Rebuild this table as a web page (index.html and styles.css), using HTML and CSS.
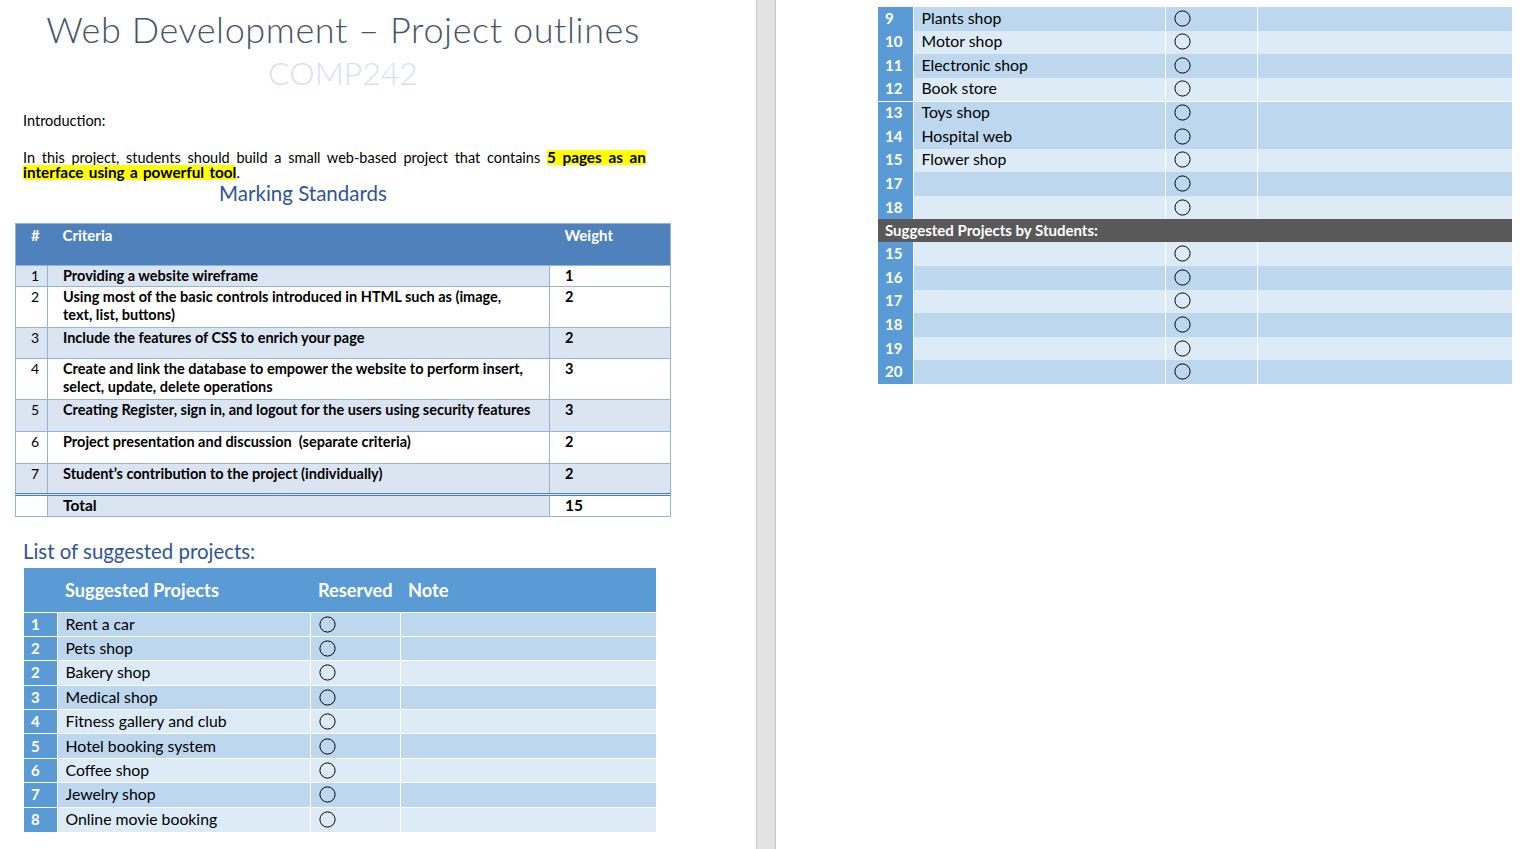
FILE: index.html
```html
<!DOCTYPE html>
<html lang="en">
<head>
<meta charset="utf-8">
<title>Web Development – Project outlines</title>
<link rel="stylesheet" href="styles.css">
</head>
<body>
<div class="doc">
  <section class="page page-left">
    <header class="titles">
      <h1 class="title">Web Development – Project outlines</h1>
      <div class="subtitle">COMP242</div>
    </header>
    <p class="intro">Introduction:</p>
    <p class="para">In this project, students should build a small web-based project that contains <mark>5 pages as an interface using a powerful tool</mark>.</p>
    <h2 class="marking">Marking Standards</h2>

    <table class="criteria">
      <colgroup><col class="c-num"><col class="c-crit"><col class="c-weight"></colgroup>
      <thead>
        <tr class="h42"><th class="num">#</th><th>Criteria</th><th>Weight</th></tr>
      </thead>
      <tbody>
        <tr class="band h21"><td class="num">1</td><td>Providing a website wireframe</td><td class="w white">1</td></tr>
        <tr class="h41"><td class="num">2</td><td>Using most of the basic controls introduced in HTML such as (image,<br>text, list, buttons)</td><td class="w">2</td></tr>
        <tr class="band h31"><td class="num">3</td><td>Include the features of CSS to enrich your page</td><td class="w">2</td></tr>
        <tr class="h41"><td class="num">4</td><td>Create and link the database to empower the website to perform insert,<br>select, update, delete operations</td><td class="w">3</td></tr>
        <tr class="band h32"><td class="num">5</td><td>Creating Register, sign in, and logout for the users using security features</td><td class="w">3</td></tr>
        <tr class="h32"><td class="num">6</td><td>Project presentation and discussion&nbsp; (separate criteria)</td><td class="w">2</td></tr>
        <tr class="band h31"><td class="num">7</td><td>Student’s contribution to the project (individually)</td><td class="w">2</td></tr>
        <tr class="total h22"><td class="num white"></td><td class="total-label">Total</td><td class="w white total-val">15</td></tr>
      </tbody>
    </table>

    <h2 class="list-title">List of suggested projects:</h2>

    <table class="projects projects-left">
      <colgroup><col class="p-num"><col class="p-name"><col class="p-res"><col class="p-note"></colgroup>
      <thead>
        <tr class="phead"><th></th><th>Suggested Projects</th><th>Reserved</th><th class="note-h">Note</th></tr>
      </thead>
      <tbody>
        <tr class="dark"><td class="num">1</td><td>Rent a car</td><td class="res"><svg class="radio" width="17" height="17" viewBox="0 0 17 17"><circle cx="8.5" cy="8.5" r="7.6"/></svg></td><td></td></tr>
        <tr class="dark"><td class="num">2</td><td>Pets shop</td><td class="res"><svg class="radio" width="17" height="17" viewBox="0 0 17 17"><circle cx="8.5" cy="8.5" r="7.6"/></svg></td><td></td></tr>
        <tr class="light"><td class="num">2</td><td>Bakery shop</td><td class="res"><svg class="radio" width="17" height="17" viewBox="0 0 17 17"><circle cx="8.5" cy="8.5" r="7.6"/></svg></td><td></td></tr>
        <tr class="dark"><td class="num">3</td><td>Medical shop</td><td class="res"><svg class="radio" width="17" height="17" viewBox="0 0 17 17"><circle cx="8.5" cy="8.5" r="7.6"/></svg></td><td></td></tr>
        <tr class="light"><td class="num">4</td><td>Fitness gallery and club</td><td class="res"><svg class="radio" width="17" height="17" viewBox="0 0 17 17"><circle cx="8.5" cy="8.5" r="7.6"/></svg></td><td></td></tr>
        <tr class="dark"><td class="num">5</td><td>Hotel booking system</td><td class="res"><svg class="radio" width="17" height="17" viewBox="0 0 17 17"><circle cx="8.5" cy="8.5" r="7.6"/></svg></td><td></td></tr>
        <tr class="light"><td class="num">6</td><td>Coffee shop</td><td class="res"><svg class="radio" width="17" height="17" viewBox="0 0 17 17"><circle cx="8.5" cy="8.5" r="7.6"/></svg></td><td></td></tr>
        <tr class="dark"><td class="num">7</td><td>Jewelry shop</td><td class="res"><svg class="radio" width="17" height="17" viewBox="0 0 17 17"><circle cx="8.5" cy="8.5" r="7.6"/></svg></td><td></td></tr>
        <tr class="light"><td class="num">8</td><td>Online movie booking</td><td class="res"><svg class="radio" width="17" height="17" viewBox="0 0 17 17"><circle cx="8.5" cy="8.5" r="7.6"/></svg></td><td></td></tr>
      </tbody>
    </table>
  </section>

  <div class="gutter"></div>

  <section class="page page-right">
    <table class="projects projects-right">
      <colgroup><col class="r-num"><col class="r-name"><col class="r-res"><col class="r-note"></colgroup>
      <tbody>
        <tr class="dark"><td class="num">9</td><td>Plants shop</td><td class="res"><svg class="radio" width="17" height="17" viewBox="0 0 17 17"><circle cx="8.5" cy="8.5" r="7.6"/></svg></td><td></td></tr>
        <tr class="light"><td class="num">10</td><td>Motor shop</td><td class="res"><svg class="radio" width="17" height="17" viewBox="0 0 17 17"><circle cx="8.5" cy="8.5" r="7.6"/></svg></td><td></td></tr>
        <tr class="dark"><td class="num">11</td><td>Electronic shop</td><td class="res"><svg class="radio" width="17" height="17" viewBox="0 0 17 17"><circle cx="8.5" cy="8.5" r="7.6"/></svg></td><td></td></tr>
        <tr class="light sep"><td class="num">12</td><td>Book store</td><td class="res"><svg class="radio" width="17" height="17" viewBox="0 0 17 17"><circle cx="8.5" cy="8.5" r="7.6"/></svg></td><td></td></tr>
        <tr class="dark"><td class="num">13</td><td>Toys shop</td><td class="res"><svg class="radio" width="17" height="17" viewBox="0 0 17 17"><circle cx="8.5" cy="8.5" r="7.6"/></svg></td><td></td></tr>
        <tr class="dark"><td class="num">14</td><td>Hospital web</td><td class="res"><svg class="radio" width="17" height="17" viewBox="0 0 17 17"><circle cx="8.5" cy="8.5" r="7.6"/></svg></td><td></td></tr>
        <tr class="light"><td class="num">15</td><td>Flower shop</td><td class="res"><svg class="radio" width="17" height="17" viewBox="0 0 17 17"><circle cx="8.5" cy="8.5" r="7.6"/></svg></td><td></td></tr>
        <tr class="dark"><td class="num">17</td><td></td><td class="res"><svg class="radio" width="17" height="17" viewBox="0 0 17 17"><circle cx="8.5" cy="8.5" r="7.6"/></svg></td><td></td></tr>
        <tr class="light"><td class="num">18</td><td></td><td class="res"><svg class="radio" width="17" height="17" viewBox="0 0 17 17"><circle cx="8.5" cy="8.5" r="7.6"/></svg></td><td></td></tr>
        <tr class="group"><td colspan="4">Suggested Projects by Students:</td></tr>
        <tr class="light"><td class="num">15</td><td></td><td class="res"><svg class="radio" width="17" height="17" viewBox="0 0 17 17"><circle cx="8.5" cy="8.5" r="7.6"/></svg></td><td></td></tr>
        <tr class="dark"><td class="num">16</td><td></td><td class="res"><svg class="radio" width="17" height="17" viewBox="0 0 17 17"><circle cx="8.5" cy="8.5" r="7.6"/></svg></td><td></td></tr>
        <tr class="light"><td class="num">17</td><td></td><td class="res"><svg class="radio" width="17" height="17" viewBox="0 0 17 17"><circle cx="8.5" cy="8.5" r="7.6"/></svg></td><td></td></tr>
        <tr class="dark"><td class="num">18</td><td></td><td class="res"><svg class="radio" width="17" height="17" viewBox="0 0 17 17"><circle cx="8.5" cy="8.5" r="7.6"/></svg></td><td></td></tr>
        <tr class="light"><td class="num">19</td><td></td><td class="res"><svg class="radio" width="17" height="17" viewBox="0 0 17 17"><circle cx="8.5" cy="8.5" r="7.6"/></svg></td><td></td></tr>
        <tr class="dark"><td class="num">20</td><td></td><td class="res"><svg class="radio" width="17" height="17" viewBox="0 0 17 17"><circle cx="8.5" cy="8.5" r="7.6"/></svg></td><td></td></tr>
      </tbody>
    </table>
  </section>
</div>
</body>
</html>
```

FILE: styles.css
```css
* { box-sizing: border-box; }

html, body {
  margin: 0;
  padding: 0;
  background: #ffffff;
}

body {
  font-family: Lato, "Open Sans", "Liberation Sans", sans-serif;
  color: #000;
}

.doc {
  display: flex;
  height: 849px;
  overflow: hidden;
}

.page-left {
  width: 756px;
  flex: none;
}

.gutter {
  width: 20px;
  flex: none;
  background: #e3e3e3;
  border-left: 1px solid #c6c6c6;
  border-right: 1px solid #c6c6c6;
}

.page-right {
  flex: 1;
  padding: 7px 0 0 102px;
}

/* ---------- headings ---------- */
.titles {
  width: 686px;
  text-align: center;
  padding-top: 7px;
}

.title {
  margin: 0;
  font-weight: 300;
  font-size: 36px;
  line-height: 44px;
  letter-spacing: 0.6px;
  color: #44546a;
}

.subtitle {
  margin-top: 0;
  font-weight: 300;
  font-size: 32px;
  line-height: 44px;
  color: #d6e0f2;
}

.intro {
  margin: 18px 0 0 23px;
  font-size: 14.5px;
  line-height: 15px;
}

.para {
  margin: 22px 0 0 23px;
  width: 623px;
  font-size: 14.5px;
  line-height: 15px;
  word-spacing: 1.5px;
  text-align: justify;
}

.para mark {
  background: linear-gradient(#ffff00, #ffff00) center / 100% 15px no-repeat;
  color: #000;
  font-weight: 700;
  font-size: 15.3px;
}

.marking {
  margin: 1px 0 0 0;
  width: 606px;
  text-align: center;
  font-weight: 400;
  font-size: 20.5px;
  line-height: 24px;
  color: #2f5496;
}

.list-title {
  margin: 22px 0 0 23px;
  font-weight: 400;
  font-size: 20.4px;
  line-height: 24px;
  color: #2f5496;
}

/* ---------- criteria table ---------- */
.criteria {
  margin: 18px 0 0 15px;
  width: 655px;
  table-layout: fixed;
  border-collapse: collapse;
  font-size: 14.5px;
  font-weight: 700;
  border: 1px solid #95b3d7;
}

.c-num { width: 32px; }
.c-crit { width: 502px; }
.c-weight { width: 121px; }

.criteria th {
  background: #4f81bd;
  color: #fff;
  font-size: 15px;
  font-weight: 700;
  text-align: left;
  vertical-align: top;
  padding: 2px 15px;
  line-height: 18px;
}

.criteria th.num { text-align: center; padding: 2px 0 0 7px; }

.criteria td {
  vertical-align: top;
  padding: 1px 6px 0 15px;
  line-height: 18px;
  border: 1px solid #95b3d7;
}

.criteria td.num {
  text-align: center;
  font-weight: 400;
  font-size: 14px;
  padding: 1px 0 0 7px;
}

.criteria .band td { background: #dbe5f1; }
.criteria .band td.white,
.criteria td.white { background: #fff; }

.criteria .total td {
  border-top: 3px double #4f81bd;
  background: #dbe5f1;
  font-size: 15.5px;
  padding-top: 0;
  line-height: 18px;
}
.criteria .total td.white { background: #fff; }

.h42 { height: 42px; }
.h21 { height: 21px; }
.h22 { height: 22px; }
.h31 { height: 31px; }
.h32 { height: 32px; }
.h41 { height: 41px; }

/* ---------- project tables ---------- */
.projects {
  table-layout: fixed;
  border-collapse: collapse;
  font-size: 15.8px;
}

.projects-left {
  margin: 5px 0 0 24px;
  width: 632px;
}

.p-num { width: 33px; }
.p-name { width: 253px; }
.p-res { width: 90px; }
.p-note { width: 256px; }

.projects-right { width: 634px; }
.r-num { width: 35px; }
.r-name { width: 252px; }
.r-res { width: 92px; }
.r-note { width: 255px; }

.phead th {
  height: 44px;
  background: #5b9bd5;
  color: #fff;
  font-size: 18.2px;
  font-weight: 700;
  text-align: left;
  padding: 0 8px;
}

.projects td {
  padding: 0 8px;
  vertical-align: middle;
  line-height: 18px;
  white-space: nowrap;
}

.projects-left tbody td {
  height: 24.4px;
  padding-bottom: 1px;
  border: 1px solid #fff;
}
.projects-left tbody tr td:first-child { border-left: 0; }
.projects-left tbody tr:last-child td { border-bottom: 0; }

.projects-right td {
  height: 23.6px;
  padding-bottom: 2px;
  border-left: 1px solid #fff;
  border-right: 1px solid #fff;
}
.projects-right tr td:first-child { border-left: 0; }
.projects-right tr td:last-child { border-right: 0; }
.projects-right tr.sep td { border-bottom: 1px solid #fff; }

.projects td.num {
  background: #5b9bd5;
  color: #fff;
  font-weight: 700;
  font-size: 15px;
  padding-left: 7px;
  padding-right: 2px;
}

.projects .dark td { background: #bdd7ee; }
.projects .light td { background: #ddebf7; }
.projects .dark td.num,
.projects .light td.num { background: #5b9bd5; }

.projects td.res { padding-top: 0; padding-bottom: 0; line-height: 0; }
.projects-right td.res { padding-bottom: 1px; }

.radio {
  display: block;
  fill: none;
  stroke: #000;
  stroke-width: 1;
}

.projects .group td {
  background: #595959;
  color: #fff;
  font-weight: 700;
  font-size: 15px;
  padding: 0 7px 2px 7px;
  height: 23px;
}
```
